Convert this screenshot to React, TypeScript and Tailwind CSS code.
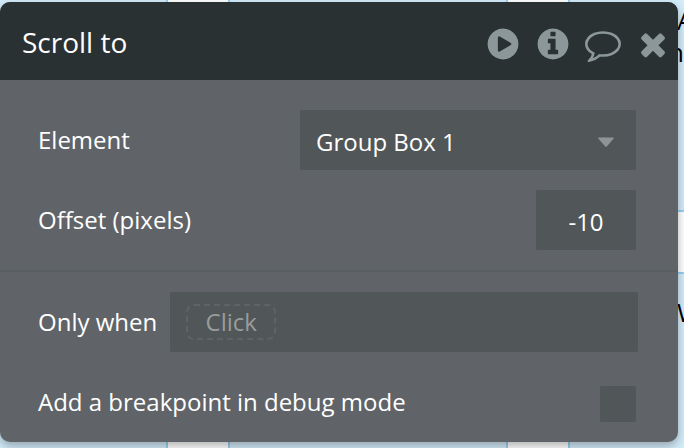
import React from "react";

const font = "font-['Open_Sans','Noto_Sans',sans-serif]";

type IconProps = { d: string };

const Icon: React.FC<IconProps> = ({ d }) => (
  <svg viewBox="0 0 1792 1792" className="h-9 w-9 fill-current" aria-hidden="true">
    <path d={d} />
  </svg>
);

const actions = [
  {
    label: "Play",
    d: "M896 128q209 0 385.5 103t279.5 279.5 103 385.5-103 385.5-279.5 279.5-385.5 103-385.5-103-279.5-279.5-103-385.5 103-385.5 279.5-279.5 385.5-103zm384 823q32-18 32-55t-32-55l-544-320q-31-19-64-1-32 19-32 56v640q0 37 32 56 16 8 32 8 17 0 32-9z",
  },
  {
    label: "Info",
    d: "M1152 1376v-160q0-14-9-23t-23-9h-96v-512q0-14-9-23t-23-9h-320q-14 0-23 9t-9 23v160q0 14 9 23t23 9h96v320h-96q-14 0-23 9t-9 23v160q0 14 9 23t23 9h448q14 0 23-9t9-23zm-128-896v-160q0-14-9-23t-23-9h-192q-14 0-23 9t-9 23v160q0 14 9 23t23 9h192q14 0 23-9t9-23zm640 416q0 209-103 385.5t-279.5 279.5-385.5 103-385.5-103-279.5-279.5-103-385.5 103-385.5 279.5-279.5 385.5-103 385.5 103 279.5 279.5 103 385.5z",
  },
  {
    label: "Comment",
    d: "M896 384q-204 0-381.5 69.5t-282 187.5-104.5 255q0 112 71.5 213.5t201.5 175.5l87 50-27 96q-24 91-70 172 152-63 275-171l43-38 57 6q69 8 130 8 204 0 381.5-69.5t282-187.5 104.5-255-104.5-255-282-187.5-381.5-69.5zm896 512q0 174-120 321.5t-326 233-450 85.5q-70 0-145-8-198 175-460 242-49 14-114 22h-5q-15 0-27-10.5t-16-27.5v-1q-3-4-.5-12t2-10 4.5-9.5l6-9 7-8.5 8-9q7-8 31-34.5t34.5-38 31-39.5 32.5-51 27-59 26-76q-157-89-247.5-220t-90.5-281q0-174 120-321.5t326-233 450-85.5 450 85.5 326 233 120 321.5z",
  },
  {
    label: "Close",
    d: "M1490 1322q0 40-28 68l-136 136q-28 28-68 28t-68-28l-294-294-294 294q-28 28-68 28t-68-28l-136-136q-28-28-28-68t28-68l294-294-294-294q-28-28-28-68t28-68l136-136q28-28 68-28t68 28l294 294 294-294q28-28 68-28t68 28l136 136q28 28 28 68t-28 68l-294 294 294 294q28 28 28 68z",
  },
];

// Page canvas that stays visible around the floating panel
const Canvas: React.FC = () => (
  <div className="absolute inset-0 overflow-hidden bg-[#d3ecfa] text-[26px] leading-8 text-black" aria-hidden="true">
    <div className="absolute inset-y-0 left-[166px] w-16 border-x-2 border-[#94d0f5] bg-white" />
    <div className="absolute inset-y-0 left-[506px] w-16 border-x-2 border-[#94d0f5] bg-white" />
    <div className="absolute top-[210px] left-[600px] h-16 w-full border-y-2 border-[#94d0f5] bg-white" />
    <p className="absolute top-1 left-[677px]">A</p>
    <p className="absolute top-9 left-[668px]">n</p>
    <p className="absolute top-[296px] left-[677px]">W</p>
  </div>
);

const App: React.FC = () => {
  return (
    <main className={`relative min-h-screen overflow-hidden pt-0.5 pr-1.5 pb-1.5 ${font}`}>
      <Canvas />
      <section className="relative overflow-hidden rounded-[10px] bg-[#606468] text-2xl leading-8 text-white shadow-[0_4px_10px_rgba(0,0,0,0.3)]">
        {/* Header */}
        <header className="flex h-[78px] items-center justify-between bg-[#2a3132] pr-[7px] pl-[22px]">
          <h1 className="pt-0.5 text-[28px] leading-9">Scroll to</h1>
          <div className="flex gap-3.5 pt-1.5 text-[#8b9799]">
            {actions.map((action) => (
              <button key={action.label} type="button" aria-label={action.label}>
                <Icon d={action.d} />
              </button>
            ))}
          </div>
        </header>

        {/* Properties */}
        <div className="flex flex-col gap-5 border-b-2 border-[#595e60] pt-[30px] pr-[42px] pb-5 pl-[38px]">
          <div className="flex items-center justify-between">
            <label htmlFor="element">Element</label>
            <div className="relative w-[336px]">
              <select
                id="element"
                className="h-[60px] w-full appearance-none rounded-xs bg-[#515658] pt-1 pl-4 text-white"
              >
                <option>Group Box 1</option>
              </select>
              <svg
                viewBox="0 0 16 10"
                className="pointer-events-none absolute top-[27px] right-[22px] h-2.5 w-4 fill-[#909497]"
                aria-hidden="true"
              >
                <path d="M1 0.500h14q1.500 0 .5 1.300L9 9.300q-1 1-2 0L.5 1.800Q-.5 .5 1 .5z" />
              </svg>
            </div>
          </div>
          <div className="flex items-center justify-between">
            <label htmlFor="offset">Offset (pixels)</label>
            <input
              id="offset"
              type="text"
              defaultValue="-10"
              className="h-[60px] w-[100px] rounded-xs bg-[#515658] pt-0.5 text-center text-white"
            />
          </div>
        </div>

        {/* Condition */}
        <div className="flex flex-col gap-5 pt-5 pr-10 pb-2.5 pl-[38px]">
          <div className="flex items-center gap-[13px]">
            <span id="only-when">Only when</span>
            <div className="flex h-[60px] grow items-center rounded-xs bg-[#515658] px-4">
              <button
                type="button"
                aria-describedby="only-when"
                className="flex h-9 w-[90px] items-center justify-center rounded-lg border-2 border-dashed border-[#5e6365] text-[#999c9b]"
              >
                Click
              </button>
            </div>
          </div>
          <div className="flex h-[60px] items-center justify-between pr-0.5">
            <label htmlFor="breakpoint">Add a breakpoint in debug mode</label>
            <input
              id="breakpoint"
              type="checkbox"
              className="mt-1 h-9 w-9 appearance-none rounded-xs bg-[#515658]"
            />
          </div>
        </div>
      </section>
    </main>
  );
};

export default App;
